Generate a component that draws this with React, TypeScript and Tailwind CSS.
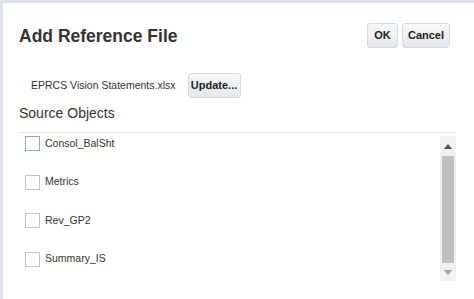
import React from 'react';

const items = ['Consol_BalSht', 'Metrics', 'Rev_GP2', 'Summary_IS'];

const Btn: React.FC<{ label: string; className?: string }> = ({ label, className }) => (
    <button
        className={`h-[25px] rounded-[3px] border border-[#d6d9dc] bg-gradient-to-b from-[#f7f8f9] to-[#e6e9ec] text-[11px] font-bold text-[#222] ${className ?? ''}`}
    >
        {label}
    </button>
);

export default function App() {
    return (
        <div
            className="w-[474px] h-[299px] bg-[#dfe4ea] pt-[3px] pl-[3px] overflow-hidden"
            style={{ fontFamily: 'Arial, "Liberation Sans", sans-serif' }}
        >
            <div className="w-full h-full bg-white pl-[16px] pr-[18px] flex flex-col">
                {/* Header */}
                <div className="flex items-start justify-between pt-[20px]">
                    <h1 className="text-[17.5px] font-bold text-[#333] leading-[22px] mt-[2px]">Add Reference File</h1>
                    <div className="flex gap-[4px] mr-[6px]">
                        <Btn label="OK" className="w-[31px]" />
                        <Btn label="Cancel" className="w-[48px]" />
                    </div>
                </div>

                {/* File row */}
                <div className="flex items-center mt-[25px] pl-[12px]">
                    <span className="text-[10.5px] text-[#333]">EPRCS Vision Statements.xlsx</span>
                    <Btn label="Update..." className="w-[53px] h-[24px] ml-[12px]" />
                </div>

                <div className="text-[14px] text-[#333] mt-[6px] leading-[18px]">Source Objects</div>
                <div className="h-px bg-[#e8e8e8] mt-[10px]" />

                {/* List */}
                <div className="flex mt-[3px]">
                    <div className="flex-1 flex flex-col gap-[23.5px] pl-[6px]">
                        {items.map((it, i) => (
                            <div key={it} className="flex items-center h-[15px]">
                                <span
                                    className={`w-[15px] h-[15px] border ${i === 0 ? 'border-[#8fa8d8]' : 'border-[#c4c4c4]'} bg-white shrink-0`}
                                />
                                <span className="ml-[5px] text-[10.5px] text-[#333]">{it}</span>
                            </div>
                        ))}
                    </div>
                    {/* Scrollbar */}
                    <div className="w-[16px] h-[145px] bg-[#f1f1f1] flex flex-col items-center">
                        <div className="h-[20px] flex items-center justify-center">
                            <svg width="8" height="5" viewBox="0 0 8 5"><path d="M0 5 L4 0 L8 5 Z" fill="#505050" /></svg>
                        </div>
                        <div className="w-[12px] flex-1 bg-[#c1c1c1]" />
                        <div className="h-[18px] flex items-center justify-center">
                            <svg width="8" height="5" viewBox="0 0 8 5"><path d="M0 0 L4 5 L8 0 Z" fill="#a3a3a3" /></svg>
                        </div>
                    </div>
                </div>
            </div>
        </div>
    );
}
